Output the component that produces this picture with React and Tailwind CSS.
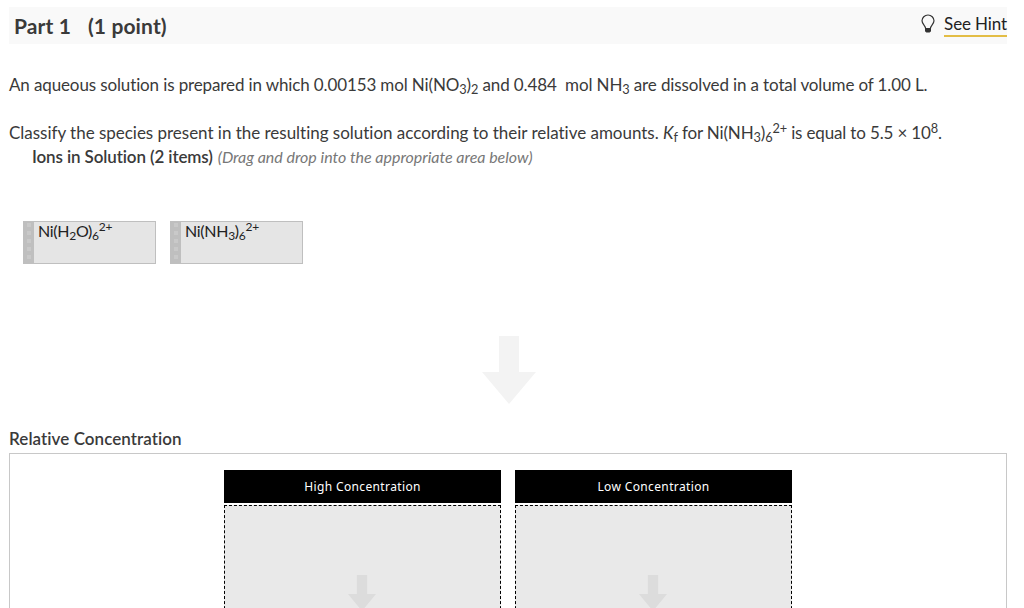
import React from "react";

const items = [
  { id: "h2o", base: "Ni(H", n: "2", end: "O)" },
  { id: "nh3", base: "Ni(NH", n: "3", end: ")" },
];

const bins = ["High Concentration", "Low Concentration"];

function Sub({ children }) {
  return <sub className="text-[75%]">{children}</sub>;
}

function Sup({ children }) {
  return <sup className="text-[75%]">{children}</sup>;
}

function DownArrow({ className }) {
  return (
    <svg viewBox="0 0 54 68" className={className} fill="currentColor" preserveAspectRatio="none">
      <path d="M17 0H37V36H54L27 68L0 36H17Z" />
    </svg>
  );
}

function Header() {
  return (
    <header className="flex h-[37px] justify-between bg-[#f9f9f9] pl-[5px]">
      <h1 className="flex gap-[17px] text-[21px] leading-[38px] font-bold tracking-[0.12px]">
        <span>Part 1</span>
        <span>(1 point)</span>
      </h1>
      <div className="flex items-start">
        <svg viewBox="0 0 14 19" className="mt-[7px] mr-[9px] h-[19px] w-[14px]" fill="none" stroke="#333" strokeWidth="1.2">
          <path d="M4.6 14.5C4.6 11.5 1 10 1 6.8A6 5.8 0 0 1 13 6.8C13 10 9.4 11.5 9.4 14.5Z" />
          <path d="M4.6 15H9.4V17L8.4 18H5.6L4.6 17Z" fill="#333" />
        </svg>
        <a href="#" className="mt-[5px] h-[25px] border-b-2 border-[#e3bd45] text-[17px] leading-6 tracking-[-0.12px] text-[#222]">
          See Hint
        </a>
      </div>
    </header>
  );
}

function Item({ item }) {
  return (
    <div className="flex h-[43px] w-[133px] border border-[#bfbfbf] bg-[#e5e5e5] text-[#222]">
      <div className="flex w-[10px] flex-col items-center gap-1 overflow-hidden bg-[#bfbfbf] pt-px">
        {[0, 1, 2, 3, 4, 5].map((n) => (
          <span key={n} className="size-1 shrink-0 bg-[#c9c9c9]" />
        ))}
      </div>
      <div className="-mt-px pl-1 text-[16px] leading-5 tracking-[-0.3px] whitespace-nowrap">
        {item.base}
        <Sub>{item.n}</Sub>
        {item.end}
        <Sub>6</Sub>
        <Sup>2+</Sup>
      </div>
    </div>
  );
}

function Bin({ title }) {
  return (
    <div className="w-[277px]">
      <div className="h-[33px] bg-black text-center font-['Noto_Sans',sans-serif] text-[12px] leading-[33px] tracking-[0.37px] text-white">
        {title}
      </div>
      <div className="mt-[2px] flex h-[180px] justify-center border border-dashed border-black bg-[#e9e9e9] pt-[69px] pr-px">
        <DownArrow className="h-[36px] w-[28px] text-[#dcdcdc]" />
      </div>
    </div>
  );
}

export default function App() {
  return (
    <main className="h-[608px] overflow-hidden bg-white pt-[7px] pr-[17px] pl-[9px] font-[Lato,sans-serif] text-[17px] text-[#3a3a3a]">
      <Header />
      <p className="mt-[29px] h-6 leading-6 tracking-[-0.125px] whitespace-nowrap">
        An aqueous solution is prepared in which 0.00153 mol Ni(NO<Sub>3</Sub>)<Sub>2</Sub> and 0.484&nbsp; mol NH
        <Sub>3</Sub> are dissolved in a total volume of 1.00 L.
      </p>
      <p className="mt-6 h-6 leading-6 tracking-[-0.02px] whitespace-nowrap">
        Classify the species present in the resulting solution according to their relative amounts.{" "}
        <span className="tracking-[-0.15px]">
          <i>K</i>
          <Sub>f</Sub> for Ni(NH<Sub>3</Sub>)<Sub>6</Sub>
          <Sup>2+</Sup> is equal to 5.5 × 10<Sup>8</Sup>.
        </span>
      </p>
      <div className="flex h-6 gap-[5px] pl-[23px] leading-6 whitespace-nowrap">
        <b className="font-semibold tracking-[-0.12px]">Ions in Solution (2 items)</b>
        <i className="text-[16px] tracking-[-0.02px] text-[#777]">(Drag and drop into the appropriate area below)</i>
      </div>
      <div className="mt-[52px] flex gap-[14px] pl-[14px]">
        {items.map((item) => (
          <Item key={item.id} item={item} />
        ))}
      </div>
      <div className="mt-[72px] flex justify-center pl-[2px]">
        <DownArrow className="h-[68px] w-[54px] text-[#f3f3f3]" />
      </div>
      <h2 className="mt-[23px] h-[26px] leading-6 font-semibold tracking-[0.06px]">Relative Concentration</h2>
      <section className="flex h-[300px] justify-center gap-[14px] border border-[#c8c8c8] pt-4">
        {bins.map((title) => (
          <Bin key={title} title={title} />
        ))}
      </section>
    </main>
  );
}
